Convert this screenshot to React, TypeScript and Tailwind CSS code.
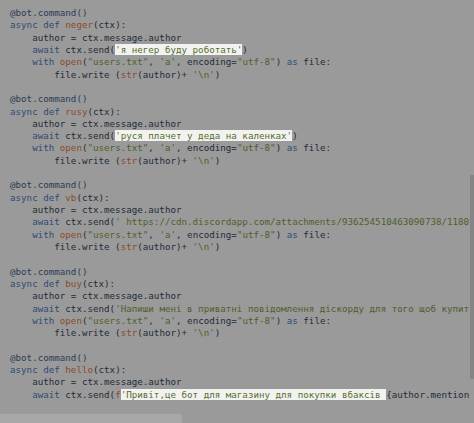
import React from 'react';

type Tok = [string, string?];

const C = {
  txt: 'text-[#222c38]',
  kw: 'text-[#2f4b73]',
  deco: 'text-[#2b3d55]',
  fn: 'text-[#8a4a2c]',
  str: 'text-[#4f5f2a]',
};

const Line: React.FC<{ toks?: Tok[] }> = ({ toks = [] }) => (
  <div className="h-[12.32px] leading-[12.32px] whitespace-pre">
    {toks.length === 0 ? ' ' : toks.map(([t, cls], i) => (
      <span key={i} className={cls ?? C.txt}>{t}</span>
    ))}
  </div>
);

const Hi: React.FC<{ children: React.ReactNode }> = ({ children }) => (
  <span className="bg-[#f2f2f0] text-[#55702e]">{children}</span>
);

interface BlockProps {
  name: string;
  send: React.ReactNode;
  last?: boolean;
}

const Block: React.FC<BlockProps> = ({ name, send, last }) => (
  <>
    <Line toks={[['@bot.command()', C.deco]]} />
    <Line toks={[['async def ', C.kw], [name, C.fn], ['(ctx):']]} />
    <Line toks={[['    author = ctx.message.author']]} />
    <div className="h-[12.32px] leading-[12.32px] whitespace-pre text-[#222c38]">
      <span className={C.kw}>    await</span> ctx.send({send}
    </div>
    {!last && (
      <>
        <Line
          toks={[
            ['    with ', C.kw],
            ['open', C.fn],
            ['('],
            ['"users.txt"', C.str],
            [', '],
            ["'a'", C.str],
            [', encoding='],
            ['"utf-8"', C.str],
            [') '],
            ['as', C.kw],
            [' file:'],
          ]}
        />
        <Line
          toks={[
            ['        file.write ('],
            ['str', C.fn],
            ['(author)+ '],
            ["'\\n'", C.str],
            [')'],
          ]}
        />
        <Line />
      </>
    )}
  </>
);

export default function App() {
  return (
    <div className="relative w-[474px] h-[423px] overflow-hidden bg-[#9a9a9a]">
      <div className="pt-[7px] pl-[10px] text-[9.2px] font-['DejaVu_Sans_Mono',monospace]">
        <Block name="neger" send={<><Hi>'я негер буду роботать'</Hi>)</>} />
        <Block name="rusy" send={<><Hi>'руся плачет у деда на каленках'</Hi>)</>} />
        <Block
          name="vb"
          send={<span className={C.str}>' https://cdn.discordapp.com/attachments/936254510463090738/1180</span>}
        />
        <Block
          name="buy"
          send={<span className={C.str}>'Напиши мені в приватні повідомлення діскорду для того щоб купит</span>}
        />
        <Block
          name="hello"
          last
          send={
            <>
              <span className={C.fn}>f</span>
              <Hi>'Привіт,це бот для магазину для покупки вбаксів </Hi>
              {'{author.mention'}
            </>
          }
        />
      </div>
      <div className="absolute right-0 top-[175px] w-[4px] h-[204px] bg-[#858585]" />
      <div className="absolute left-0 bottom-0 w-[182px] h-[9px] rounded-tr-[3px] bg-[#a8a8a8]" />
    </div>
  );
}
